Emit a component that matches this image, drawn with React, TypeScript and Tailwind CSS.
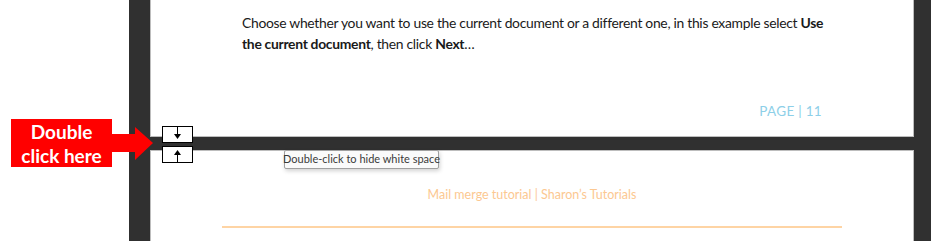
import React from "react";

export default function App() {
  return (
    <div className="relative w-[943px] h-[241px] overflow-hidden bg-white flex" style={{ fontFamily: "Lato, 'Liberation Sans', sans-serif" }}>
      <div className="w-[129px] shrink-0" />
      <div className="w-[802px] shrink-0 bg-[#303030] pl-[21px] pr-[17px] flex flex-col gap-[13px]">
        <div className="h-[137px] shrink-0 bg-white border-l border-r border-b border-[#bdbdbd] pl-[91px] pr-[60px] pt-[12px] flex flex-col">
          <p className="text-[13.9px] leading-[21px] tracking-[-0.3px] text-[#1a1a1a] whitespace-nowrap">
            Choose whether you want to use the current document or a different one, in this example select <b>Use</b>
            <br />
            <b>the current document</b>, then click <b>Next</b>…
          </p>
          <div className="mt-auto mb-[17px] mr-[31px] text-right text-[13.5px] leading-[16px] text-[#8dcfe8] tracking-[0.3px]">PAGE | 11</div>
        </div>
        <div className="flex-1 bg-white border-l border-r border-t border-[#bdbdbd] flex flex-col items-center pt-[36px]">
          <div className="text-[12.5px] leading-[16px] text-[#fcc891]">Mail merge tutorial | Sharon’s Tutorials</div>
          <div className="mt-[23px] w-[620px] h-[2px] bg-[#fed4a4]" />
        </div>
      </div>

      {/* Red annotation */}
      <div className="absolute left-[11px] top-[119px] w-[101px] h-[48px] bg-[#ff0000] flex flex-col items-center justify-center text-white font-bold text-[19px] leading-[24px] pt-[1px]">
        <span>Double</span>
        <span>click here</span>
      </div>
      <svg className="absolute left-[111px] top-[126px]" width="43" height="35" viewBox="0 0 43 35">
        <polygon points="0,8 24,8 24,1 42,17 24,34 24,26 0,26" fill="#ff0000" />
      </svg>

      {/* Whitespace toggle icons */}
      <svg className="absolute left-[162px] top-[126px]" width="31" height="17" viewBox="0 0 31 17">
        <rect x="0.5" y="0.5" width="30" height="16" fill="#fff" stroke="#000" />
        <line x1="15.5" y1="0" x2="15.5" y2="9" stroke="#000" />
        <polygon points="12,8 19,8 15.5,13" fill="#000" />
      </svg>
      <svg className="absolute left-[162px] top-[146px]" width="31" height="17" viewBox="0 0 31 17">
        <rect x="0.5" y="0.5" width="30" height="16" fill="#fff" stroke="#000" />
        <line x1="15.5" y1="8" x2="15.5" y2="17" stroke="#000" />
        <polygon points="12,9 19,9 15.5,4" fill="#000" />
      </svg>

      {/* Tooltip */}
      <div className="absolute left-[284px] top-[150px] w-[155px] h-[19px] bg-[#fafafa] border border-[#a0a0a0] rounded-[2px] shadow-[1px_2px_4px_rgba(0,0,0,0.18)] flex items-center justify-center whitespace-nowrap text-[11px] text-[#3b3b3b]">
        Double-click to hide white space
      </div>
    </div>
  );
}
